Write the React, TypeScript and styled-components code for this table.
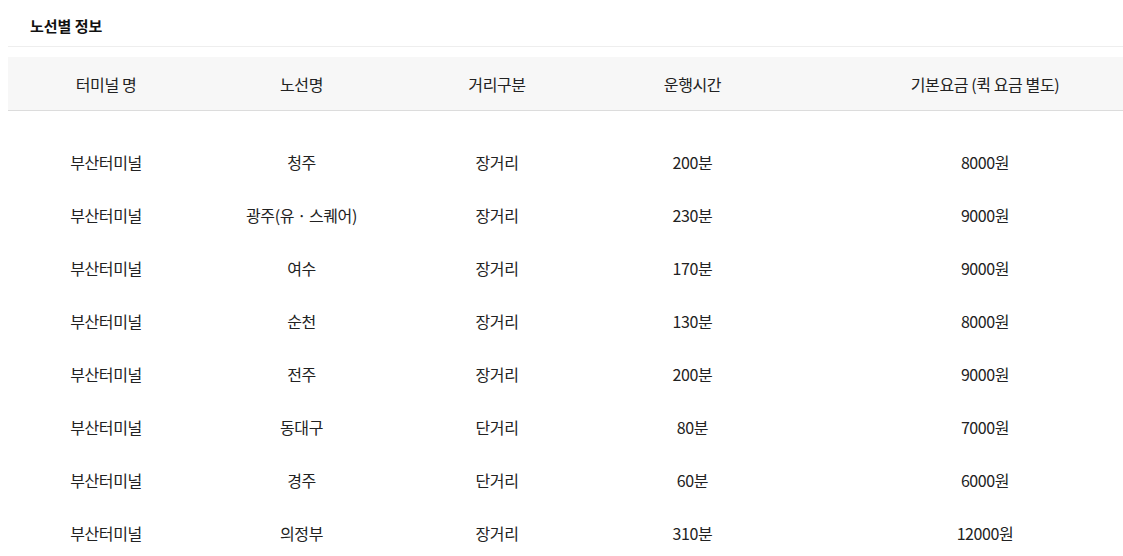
import React from "react";
import styled, { createGlobalStyle } from "styled-components";

const Global = createGlobalStyle`
  html, body { margin: 0; padding: 0; background: #fff; }
  body { font-family: "Noto Sans CJK KR", "Noto Sans", sans-serif; color: #222; overflow: hidden; }
`;

const Page = styled.div`
  margin-left: 8px;
  width: 1115px;
  overflow: hidden;
`;

const Title = styled.div`
  font-size: 15px;
  font-weight: 700;
  color: #111;
  padding: 15px 0 0 22px;
  height: 47px;
  box-sizing: border-box;
  line-height: 22px;
  border-bottom: 1px solid #eee;
`;

const Cols = "196px 195px 196px 195px 390px";

const HeaderRow = styled.div`
  margin-top: 10px;
  display: grid;
  grid-template-columns: ${Cols};
  height: 54px;
  box-sizing: border-box;
  background: #f7f7f7;
  border-bottom: 1px solid #dcdcdc;
  align-items: center;
`;

const Body = styled.div`
  padding-top: 24px;
`;

const Row = styled.div`
  display: grid;
  grid-template-columns: ${Cols};
  height: 53px;
  align-items: center;
`;

const Cell = styled.div`
  text-align: center;
  font-size: 16px;
  color: #222;
  letter-spacing: -0.4px;
  white-space: nowrap;
`;

const headers = ["터미널 명", "노선명", "거리구분", "운행시간", "기본요금 (퀵 요금 별도)"];

const rows = [
  ["부산터미널", "청주", "장거리", "200분", "8000원"],
  ["부산터미널", "광주(유 · 스퀘어)", "장거리", "230분", "9000원"],
  ["부산터미널", "여수", "장거리", "170분", "9000원"],
  ["부산터미널", "순천", "장거리", "130분", "8000원"],
  ["부산터미널", "전주", "장거리", "200분", "9000원"],
  ["부산터미널", "동대구", "단거리", "80분", "7000원"],
  ["부산터미널", "경주", "단거리", "60분", "6000원"],
  ["부산터미널", "의정부", "장거리", "310분", "12000원"],
];

export default function App() {
  return (
    <Page>
      <Global />
      <Title>노선별 정보</Title>
      <HeaderRow>
        {headers.map((h) => (
          <Cell key={h}>{h}</Cell>
        ))}
      </HeaderRow>
      <Body>
        {rows.map((r, i) => (
          <Row key={i}>
            {r.map((c, j) => (
              <Cell key={j}>{c}</Cell>
            ))}
          </Row>
        ))}
      </Body>
    </Page>
  );
}
